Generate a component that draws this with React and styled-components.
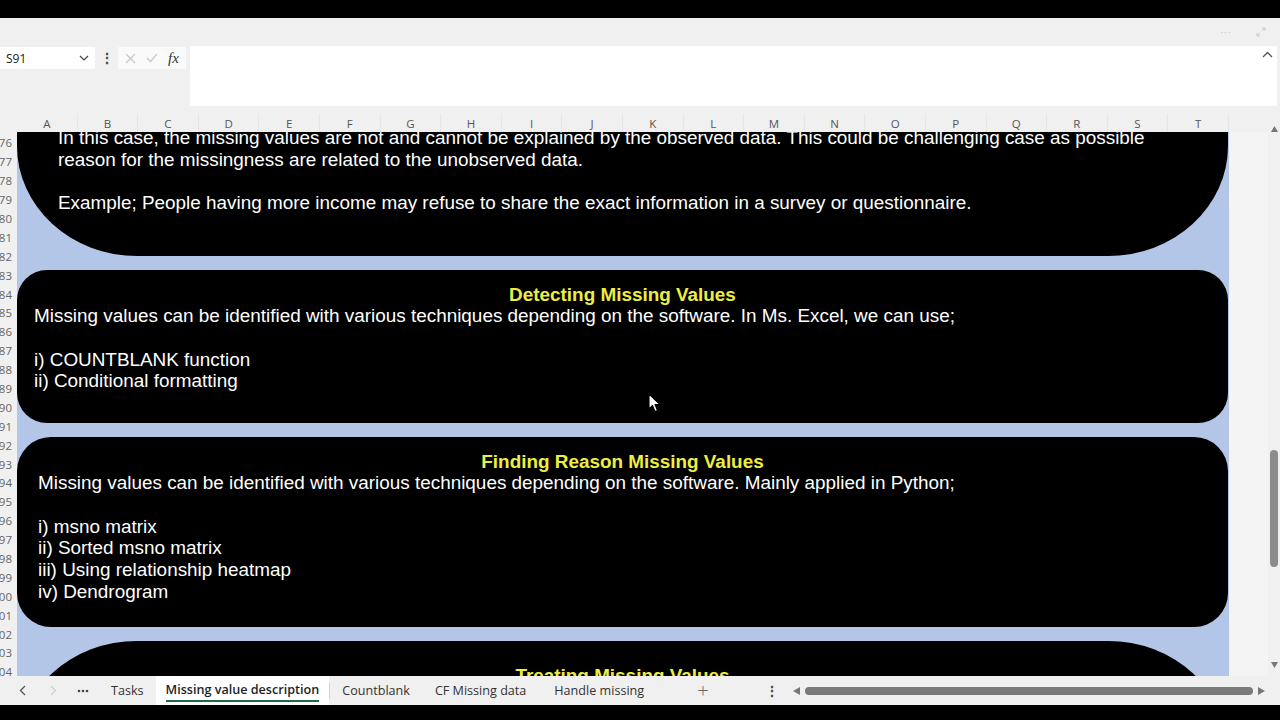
import React from 'react'
import styled, { createGlobalStyle } from 'styled-components'

const GlobalStyle = createGlobalStyle`
  html, body { margin: 0; padding: 0; background: #000; }
  body { font-family: "Liberation Sans", Arial, sans-serif; }
  * { box-sizing: border-box; }
`

const sheet_blue = '#b4c6e7'
const ui_grey = '#f0f0f0'
const ui_font = '"Open Sans", "Noto Sans", sans-serif'

const Window = styled.div`
  width: 1280px;
  height: 720px;
  display: flex;
  flex-direction: column;
  overflow: hidden;
  position: relative;
  background: #000;
`

const BlackBar = styled.div`
  height: ${p => p.h}px;
  flex: ${p => (p.grow ? 1 : 'none')};
  background: #000;
`

/* ribbon / formula bar */
const Ribbon = styled.div`
  height: 96px;
  background: ${ui_grey};
  display: flex;
  flex-direction: column;
`

const TopStrip = styled.div`
  height: 28px;
  display: flex;
  justify-content: flex-end;
  align-items: center;
  gap: 24px;
  padding-right: 14px;
  color: #c8c8c8;
  font-size: 11px;
  font-family: ${ui_font};
  letter-spacing: 1px;
`

const FormulaRow = styled.div`
  height: 60px;
  display: flex;
  align-items: flex-start;
  padding-right: 3px;
`

const NameBox = styled.div`
  width: 95px;
  height: 22px;
  margin-top: 1px;
  background: #fff;
  display: flex;
  align-items: center;
  justify-content: space-between;
  padding: 0 6px 0 6px;
  font-family: ${ui_font};
  font-size: 12px;
  color: #222;
`

const VDots = styled.div`
  width: 23px;
  height: 22px;
  margin-top: 1px;
  display: flex;
  align-items: center;
  justify-content: center;
  color: #444;
  font-size: 14px;
  font-weight: bold;
`

const FxBox = styled.div`
  width: 68px;
  height: 22px;
  margin-top: 1px;
  background: #fafafa;
  display: flex;
  align-items: center;
  justify-content: space-around;
  padding: 0 2px;
`

const FxLabel = styled.span`
  font-family: "Liberation Serif", serif;
  font-style: italic;
  font-size: 15px;
  color: #333;
`

const FormulaInput = styled.div`
  flex: 1;
  height: 60px;
  margin-left: 4px;
  background: #fff;
  display: flex;
  justify-content: flex-end;
  align-items: flex-start;
  padding: 5px 4px 0 0;
`

const RibbonGap = styled.div`
  height: 8px;
`

/* grid */
const Main = styled.div`
  height: 562px;
  display: flex;
  background: ${ui_grey};
`

const Grid = styled.div`
  width: 1268px;
  display: flex;
  flex-direction: column;
`

const HeaderRow = styled.div`
  height: 18px;
  display: flex;
  background: ${ui_grey};
`

const Corner = styled.div`
  width: 17px;
`

const ColHeads = styled.div`
  display: grid;
  grid-template-columns: repeat(20, 60.6px);
`

const ColHead = styled.div`
  display: flex;
  align-items: center;
  justify-content: center;
  font-family: ${ui_font};
  font-size: 11.5px;
  color: #555;
  border-right: 1px solid #e6e6e6;
`

const Body = styled.div`
  height: 544px;
  display: flex;
`

const RowHeads = styled.div`
  width: 17px;
  padding-top: 1.5px;
  display: flex;
  flex-direction: column;
  overflow: hidden;
  background: ${ui_grey};
`

const RowHead = styled.div`
  height: 18.9px;
  flex: none;
  display: flex;
  align-items: center;
  justify-content: flex-end;
  padding-right: 5px;
  font-family: ${ui_font};
  font-size: 11.5px;
  color: #666;
  white-space: nowrap;
`

const Canvas = styled.div`
  width: 1212px;
  background: ${sheet_blue};
  overflow: hidden;
  display: flex;
  flex-direction: column;
  gap: 14px;
  padding-right: 1px;
`

const Gutter = styled.div`
  flex: 1;
  background: #f4f4f4;
`

const Shape = styled.div`
  flex: none;
  height: ${p => p.h}px;
  margin-top: ${p => p.mt || 0}px;
  padding-top: ${p => p.pt}px;
  background: #000;
  border-radius: ${p => p.radius};
  color: #fff;
  font-size: 18.9px;
  line-height: 21.7px;
  white-space: nowrap;
`

const Heading = styled.div`
  text-align: center;
  font-weight: bold;
  color: #eeee40;
`

const TextBlock = styled.div`
  padding-left: ${p => p.indent}px;
`

const Line = styled.div`
  height: 21.7px;
`

const VScroll = styled.div`
  width: 12px;
  display: flex;
  flex-direction: column;
  align-items: center;
  background: ${ui_grey};
`

const Thumb = styled.div`
  width: 8px;
  height: 117px;
  margin-top: 313px;
  border-radius: 4px;
  background: #8c8c8c;
`

const ScrollEnd = styled.div`
  margin-top: auto;
  padding-bottom: 3px;
`

/* sheet tabs */
const TabBar = styled.div`
  height: 29px;
  background: ${ui_grey};
  display: flex;
  align-items: center;
  padding-left: 14px;
  font-family: ${ui_font};
  font-size: 12.6px;
  color: #333;
`

const NavBtn = styled.div`
  width: 16px;
  height: 29px;
  margin-right: ${p => p.mr}px;
  display: flex;
  align-items: center;
  justify-content: center;
`

const Tab = styled.div`
  height: 29px;
  display: flex;
  align-items: center;
  padding: 0 ${p => p.px || 13}px;
  margin-left: ${p => p.ml || 0}px;
  background: ${p => (p.active ? '#fff' : 'transparent')};
  font-weight: ${p => (p.active ? 600 : 400)};
  color: ${p => (p.active ? '#1f1f1f' : '#333')};
  white-space: nowrap;
`

const TabLabel = styled.span`
  padding-bottom: ${p => (p.active ? 2 : 0)}px;
  border-bottom: ${p => (p.active ? '2px solid #1e6b47' : 'none')};
  margin-top: ${p => (p.active ? 2 : 0)}px;
`

const Sep = styled.div`
  width: 1px;
  height: 16px;
  background: #d6d6d6;
`

const AddTab = styled.div`
  margin-left: 40px;
  font-size: 20px;
  font-weight: 300;
  color: #666;
`

const TabDots = styled.div`
  margin-left: 56px;
  font-size: 14px;
  font-weight: bold;
  color: #444;
`

const HScroll = styled.div`
  margin-left: 14px;
  display: flex;
  align-items: center;
  gap: 5px;
`

const HThumb = styled.div`
  width: 448px;
  height: 8px;
  border-radius: 4px;
  background: #7a7a7a;
`

const Cursor = styled.svg`
  position: absolute;
  left: 648px;
  top: 393px;
`

const cols = 'ABCDEFGHIJKLMNOPQRST'.split('')
const rows = Array.from({ length: 29 }, (_, i) => 76 + i)

const Tri = ({ dir }) => (
  <svg width="7" height="8" viewBox="0 0 7 8">
    {dir === 'left' && <polygon points="7,0 7,8 0,4" fill="#777" />}
    {dir === 'right' && <polygon points="0,0 0,8 7,4" fill="#777" />}
    {dir === 'up' && <polygon points="0,7 7,7 3.5,1" fill="#777" />}
    {dir === 'down' && <polygon points="0,1 7,1 3.5,7" fill="#777" />}
  </svg>
)

export default function App() {
  return (
    <Window>
      <GlobalStyle />
      <BlackBar h={18} />
      <Ribbon>
        <TopStrip>
          <span>⋯</span>
          <svg width="10" height="10" viewBox="0 0 10 10">
            <path d="M6 1h3v3M4 9H1V6M9 1L6 4M1 9l3-3" stroke="#c8c8c8" fill="none" />
          </svg>
        </TopStrip>
        <FormulaRow>
          <NameBox>
            <span>S91</span>
            <svg width="10" height="6" viewBox="0 0 10 6">
              <polyline points="1,1 5,5 9,1" stroke="#444" strokeWidth="1.2" fill="none" />
            </svg>
          </NameBox>
          <VDots>⋮</VDots>
          <FxBox>
            <svg width="11" height="11" viewBox="0 0 11 11">
              <path d="M1 1l9 9M10 1l-9 9" stroke="#c9c9c9" strokeWidth="1.3" />
            </svg>
            <svg width="12" height="10" viewBox="0 0 12 10">
              <polyline points="1,5 4.5,8.5 11,1" stroke="#c9c9c9" strokeWidth="1.3" fill="none" />
            </svg>
            <FxLabel>fx</FxLabel>
          </FxBox>
          <FormulaInput>
            <svg width="11" height="7" viewBox="0 0 11 7">
              <polyline points="1,6 5.5,1.5 10,6" stroke="#555" strokeWidth="1.3" fill="none" />
            </svg>
          </FormulaInput>
        </FormulaRow>
        <RibbonGap />
      </Ribbon>

      <Main>
        <Grid>
          <HeaderRow>
            <Corner />
            <ColHeads>
              {cols.map(c => (
                <ColHead key={c}>{c}</ColHead>
              ))}
            </ColHeads>
          </HeaderRow>
          <Body>
            <RowHeads>
              {rows.map(r => (
                <RowHead key={r}>{r}</RowHead>
              ))}
            </RowHeads>
            <Canvas>
              <Shape h={150} mt={-26} pt={21} radius="0 0 120px 120px / 0 0 110px 110px">
                <TextBlock indent={41}>
                  <Line>In this case, the missing values are not and cannot be explained by the observed data. This could be challenging case as possible</Line>
                  <Line>reason for the missingness are related to the unobserved data.</Line>
                  <Line />
                  <Line>Example; People having more income may refuse to share the exact information in a survey or questionnaire.</Line>
                </TextBlock>
              </Shape>
              <Shape h={153} pt={13.5} radius="30px">
                <Heading>Detecting Missing Values</Heading>
                <TextBlock indent={17}>
                  <Line>Missing values can be identified with various techniques depending on the software. In Ms. Excel, we can use;</Line>
                  <Line />
                  <Line>i) COUNTBLANK function</Line>
                  <Line>ii) Conditional formatting</Line>
                </TextBlock>
              </Shape>
              <Shape h={190} pt={13.5} radius="34px">
                <Heading>Finding Reason Missing Values</Heading>
                <TextBlock indent={21}>
                  <Line>Missing values can be identified with various techniques depending on the software. Mainly applied in Python;</Line>
                  <Line />
                  <Line>i) msno matrix</Line>
                  <Line>ii) Sorted msno matrix</Line>
                  <Line>iii) Using relationship heatmap</Line>
                  <Line>iv) Dendrogram</Line>
                </TextBlock>
              </Shape>
              <Shape h={220} pt={24} radius="120px 120px 0 0 / 110px 110px 0 0">
                <Heading>Treating Missing Values</Heading>
              </Shape>
            </Canvas>
            <Gutter />
          </Body>
        </Grid>
        <VScroll>
          <div style={{ paddingTop: 5 }}>
            <Tri dir="up" />
          </div>
          <Thumb />
          <ScrollEnd>
            <Tri dir="down" />
          </ScrollEnd>
        </VScroll>
      </Main>

      <TabBar>
        <NavBtn mr={15}>
          <svg width="7" height="11" viewBox="0 0 7 11">
            <polyline points="6,1 1.5,5.5 6,10" stroke="#555" strokeWidth="1.3" fill="none" />
          </svg>
        </NavBtn>
        <NavBtn mr={14}>
          <svg width="7" height="11" viewBox="0 0 7 11">
            <polyline points="1,1 5.5,5.5 1,10" stroke="#d0d0d0" strokeWidth="1.3" fill="none" />
          </svg>
        </NavBtn>
        <NavBtn mr={8}>
          <svg width="12" height="4" viewBox="0 0 12 4">
            <circle cx="2" cy="2" r="1.3" fill="#444" />
            <circle cx="6" cy="2" r="1.3" fill="#444" />
            <circle cx="10" cy="2" r="1.3" fill="#444" />
          </svg>
        </NavBtn>
        <Tab px={12}>Tasks</Tab>
        <Tab active px={10}>
          <TabLabel active>Missing value description</TabLabel>
        </Tab>
        <Sep />
        <Tab px={12}>Countblank</Tab>
        <Tab>CF Missing data</Tab>
        <Tab ml={2}>Handle missing</Tab>
        <AddTab>+</AddTab>
        <TabDots>⋮</TabDots>
        <HScroll>
          <Tri dir="left" />
          <HThumb />
          <Tri dir="right" />
        </HScroll>
      </TabBar>
      <BlackBar grow />

      <Cursor width="14" height="20" viewBox="0 0 14 20">
        <path d="M1 1 L1 16 L4.5 12.5 L7 18.5 L9.5 17.5 L7 11.5 L12 11.5 Z" fill="#fff" stroke="#000" strokeWidth="1.1" strokeLinejoin="round" />
      </Cursor>
    </Window>
  )
}
